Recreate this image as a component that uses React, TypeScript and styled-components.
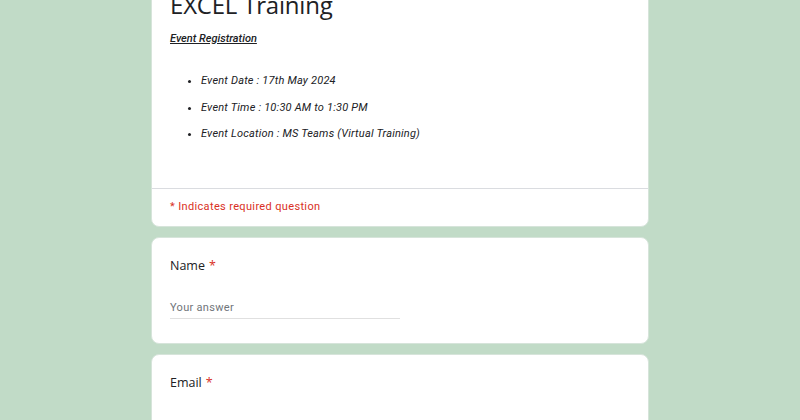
import * as React from 'react';
import styled, { createGlobalStyle } from 'styled-components';

const GlobalStyle = createGlobalStyle`
  html, body {
    margin: 0;
    padding: 0;
    background: #c1dbc7;
    overflow: hidden;
  }
  body {
    font-family: Roboto, "Liberation Sans", sans-serif;
    color: #202124;
  }
`;

const Page = styled.div`
  width: 498px;
  margin: -32px auto 0;
  display: flex;
  flex-direction: column;
  gap: 10px;
`;

const Card = styled.div`
  background: #fff;
  border-radius: 8px;
  border: 1px solid #d6e4da;
  overflow: hidden;
`;

const HeaderBody = styled.div`
  padding: 20px 18px 46px;
`;

const Title = styled.h1`
  margin: 0;
  font-family: "Open Sans", Roboto, sans-serif;
  font-weight: 400;
  font-size: 24px;
  line-height: 32px;
  letter-spacing: -0.2px;
  color: #202124;
`;

const Subtitle = styled.div`
  margin-top: 10px;
  font-size: 11px;
  font-style: italic;
  font-weight: 500;
  text-decoration: underline;
  line-height: 16px;
  color: #202124;
`;

const List = styled.ul`
  margin: 26px 0 0;
  padding-left: 31px;
  font-size: 11px;
  font-style: italic;
  line-height: 16px;
  color: #202124;
  letter-spacing: 0.2px;
`;

const Item = styled.li`
  & + & {
    margin-top: 10.5px;
  }
`;

const Footer = styled.div`
  border-top: 1px solid #dadce0;
  padding: 11px 18px 13px;
  font-size: 11px;
  line-height: 13px;
  letter-spacing: 0.35px;
  color: #d93025;
`;

const Question = styled.div`
  padding: 18px 18px 24px;
`;

const Label = styled.div`
  font-family: "Open Sans", Roboto, sans-serif;
  font-size: 12.5px;
  line-height: 20px;
  color: #202124;
`;

const Star = styled.span`
  color: #d93025;
  margin-left: 4px;
`;

const Answer = styled.div`
  margin-top: 24px;
  width: 230px;
  border-bottom: 1px solid #e0e0e0;
  padding-bottom: 2px;
  font-size: 11px;
  line-height: 16px;
  letter-spacing: 0.3px;
  color: #70757a;
`;

export default function App() {
  return (
    <>
      <GlobalStyle />
      <Page>
        <Card>
          <HeaderBody>
            <Title>EXCEL Training</Title>
            <Subtitle>Event Registration</Subtitle>
            <List>
              <Item>Event Date : 17th May 2024</Item>
              <Item>Event Time : 10:30 AM to 1:30 PM</Item>
              <Item>Event Location : MS Teams (Virtual Training)</Item>
            </List>
          </HeaderBody>
          <Footer>* Indicates required question</Footer>
        </Card>
        <Card>
          <Question>
            <Label>Name<Star>*</Star></Label>
            <Answer>Your answer</Answer>
          </Question>
        </Card>
        <Card>
          <Question>
            <Label>Email<Star>*</Star></Label>
            <Answer>Your answer</Answer>
          </Question>
        </Card>
      </Page>
    </>
  );
}
